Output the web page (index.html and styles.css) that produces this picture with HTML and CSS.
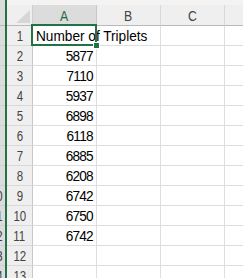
FILE: index.html
```html
<!DOCTYPE html>
<html>
<head>
<meta charset="utf-8">
<link rel="stylesheet" href="styles.css">
</head>
<body>
<div class="app">
  <div class="pane-left">
    <div class="pl-top"></div>
    <div class="pl-head"></div>
    <div class="pl-row"></div>
    <div class="pl-row"></div>
    <div class="pl-row"></div>
    <div class="pl-row"></div>
    <div class="pl-row"></div>
    <div class="pl-row"></div>
    <div class="pl-row"></div>
    <div class="pl-row"></div>
    <div class="pl-row"><span class="n">10</span></div>
    <div class="pl-row"><span class="n">11</span></div>
    <div class="pl-row"><span class="n">12</span></div>
    <div class="pl-row"><span class="n">13</span></div>
    <div class="pl-row"><span class="n">14</span></div>
  </div>
  <div class="split"></div>
  <div class="sheet">
    <div class="topbar"></div>
    <div class="row head">
      <div class="corner"><svg width="14" height="13" viewBox="0 0 14 13"><polygon points="14,0 14,13 0,13" fill="#d6d6d6"/></svg></div>
      <div class="ch sel"><span class="n">A</span></div>
      <div class="ch"><span class="n">B</span></div>
      <div class="ch"><span class="n">C</span></div>
      <div class="ch rest"></div>
    </div>
    <div class="row"><div class="rh"><span class="n">1</span></div><div class="c text"><span class="t">Number of Triplets</span></div><div class="c"></div><div class="c"></div><div class="c rest"></div></div>
    <div class="row"><div class="rh"><span class="n">2</span></div><div class="c num"><span class="v">5877</span></div><div class="c"></div><div class="c"></div><div class="c rest"></div></div>
    <div class="row"><div class="rh"><span class="n">3</span></div><div class="c num"><span class="v">7110</span></div><div class="c"></div><div class="c"></div><div class="c rest"></div></div>
    <div class="row"><div class="rh"><span class="n">4</span></div><div class="c num"><span class="v">5937</span></div><div class="c"></div><div class="c"></div><div class="c rest"></div></div>
    <div class="row"><div class="rh"><span class="n">5</span></div><div class="c num"><span class="v">6898</span></div><div class="c"></div><div class="c"></div><div class="c rest"></div></div>
    <div class="row"><div class="rh"><span class="n">6</span></div><div class="c num"><span class="v">6118</span></div><div class="c"></div><div class="c"></div><div class="c rest"></div></div>
    <div class="row"><div class="rh"><span class="n">7</span></div><div class="c num"><span class="v">6885</span></div><div class="c"></div><div class="c"></div><div class="c rest"></div></div>
    <div class="row"><div class="rh"><span class="n">8</span></div><div class="c num"><span class="v">6208</span></div><div class="c"></div><div class="c"></div><div class="c rest"></div></div>
    <div class="row"><div class="rh"><span class="n">9</span></div><div class="c num"><span class="v">6742</span></div><div class="c"></div><div class="c"></div><div class="c rest"></div></div>
    <div class="row"><div class="rh"><span class="n">10</span></div><div class="c num"><span class="v">6750</span></div><div class="c"></div><div class="c"></div><div class="c rest"></div></div>
    <div class="row"><div class="rh"><span class="n">11</span></div><div class="c num"><span class="v">6742</span></div><div class="c"></div><div class="c"></div><div class="c rest"></div></div>
    <div class="row"><div class="rh"><span class="n">12</span></div><div class="c"></div><div class="c"></div><div class="c"></div><div class="c rest"></div></div>
    <div class="row"><div class="rh"><span class="n">13</span></div><div class="c"></div><div class="c"></div><div class="c"></div><div class="c rest"></div></div>
    <div class="selection"><div class="handle"></div></div>
  </div>
</div>
</body>
</html>
```
FILE: styles.css
```css
html, body {
  margin: 0;
  padding: 0;
  background: #ffffff;
  overflow: hidden;
}
body {
  width: 243px;
  height: 278px;
  font-family: "Liberation Sans", Arial, sans-serif;
}
.app {
  display: flex;
  width: 243px;
  height: 278px;
  overflow: hidden;
}
.pane-left {
  width: 5px;
  flex: none;
  background: #dcdcdc;
  display: flex;
  flex-direction: column;
}
.pl-top { height: 5px; flex: none; }
.pl-head { height: 20px; flex: none; border-bottom: 1px solid #b9b9b9; }
.pl-row {
  height: 19px;
  flex: none;
  border-bottom: 1px solid #cfcfcf;
  display: flex;
  justify-content: flex-end;
  align-items: center;
  overflow: hidden;
  padding-right: 2px;
  font-size: 14px;
  color: #3f3f3f;
  white-space: nowrap;
}
.split {
  width: 2px;
  flex: none;
  background: #217346;
}
.sheet {
  position: relative;
  flex: 1;
  display: flex;
  flex-direction: column;
}
.topbar {
  height: 5px;
  flex: none;
  background: #f5f3f2;
}
.row {
  display: flex;
  height: 20px;
  flex: none;
}
.row.head {
  height: 21px;
}
.corner {
  width: 26px;
  flex: none;
  box-sizing: border-box;
  background: #efefef;
  border-right: 1px solid #cfcfcf;
  border-bottom: 1px solid #b9b9b9;
  display: flex;
  justify-content: flex-end;
  align-items: flex-end;
  padding: 0 2px 2px 0;
}
.corner svg { display: block; }
.n {
  display: inline-block;
  transform: scaleX(0.82);
  transform-origin: center;
}
.pl-row .n { transform-origin: right; }
.ch {
  width: 64px;
  flex: none;
  box-sizing: border-box;
  background: #efefef;
  border-right: 1px solid #d8d8d8;
  border-bottom: 1px solid #b9b9b9;
  display: flex;
  align-items: center;
  justify-content: center;
  font-size: 15px;
  color: #444444;
  padding-top: 1px;
}
.ch.sel {
  background: #dcdcdc;
  color: #1e6b41;
  border-bottom: 2px solid #217346;
  border-right-color: #c8c8c8;
}
.ch.rest { flex: 1; border-right: none; }
.rh {
  width: 26px;
  flex: none;
  box-sizing: border-box;
  background: #efefef;
  border-right: 1px solid #c8c8c8;
  border-bottom: 1px solid #d8d8d8;
  display: flex;
  align-items: center;
  justify-content: center;
  font-size: 14px;
  color: #444444;
}
.c {
  width: 64px;
  flex: none;
  box-sizing: border-box;
  border-right: 1px solid #dedede;
  border-bottom: 1px solid #dedede;
  display: flex;
  align-items: center;
  font-size: 15.5px;
  color: #000000;
  white-space: nowrap;
  padding: 1px 3px 0 3px;
}
.c.rest { flex: 1; border-right: none; }
.c.text { overflow: visible; position: relative; z-index: 1; }
.c.num { justify-content: flex-end; }
.t {
  display: inline-block;
  transform: scaleX(0.88);
  transform-origin: left;
}
.v {
  display: inline-block;
  letter-spacing: -0.9px;
  transform: scaleX(0.88);
  transform-origin: right;
}
.selection {
  position: absolute;
  left: 24px;
  top: 24px;
  width: 66px;
  height: 22px;
  box-sizing: border-box;
  border: 2px solid #217346;
  z-index: 2;
}
.handle {
  position: absolute;
  right: -5px;
  bottom: -5px;
  width: 5px;
  height: 5px;
  background: #217346;
  border: 1px solid #ffffff;
}
```
